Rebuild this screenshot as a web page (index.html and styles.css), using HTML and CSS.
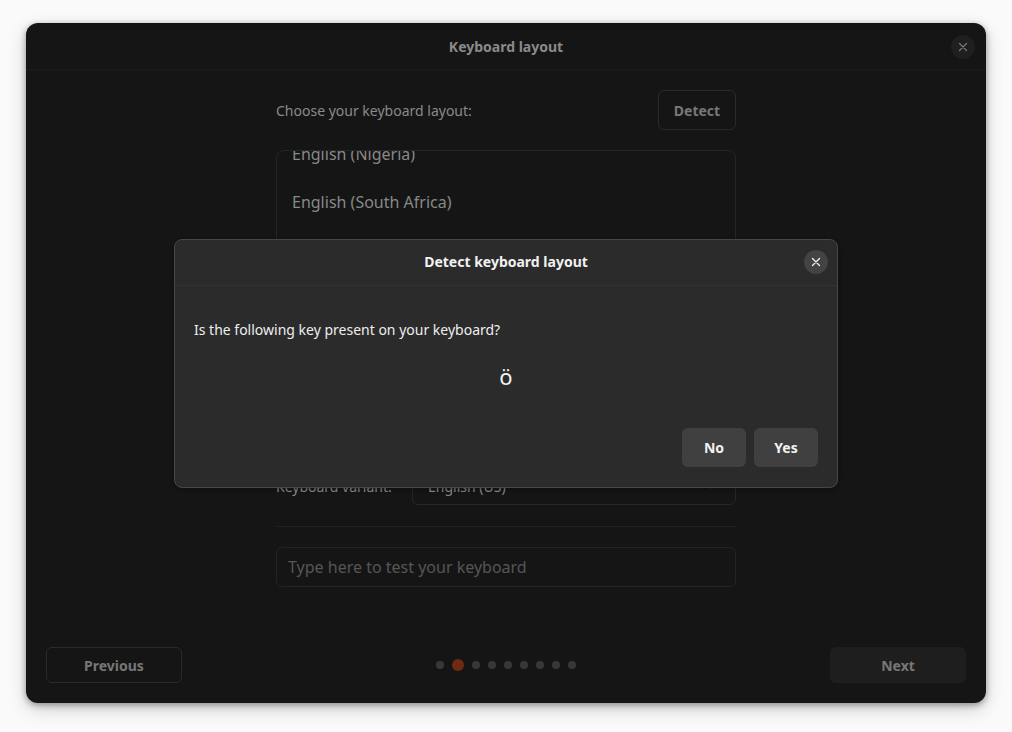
FILE: index.html
```html
<!DOCTYPE html>
<html lang="en">
<head>
<meta charset="utf-8">
<title>Keyboard layout</title>
<link rel="stylesheet" href="styles.css">
</head>
<body>
<div class="window">
  <header class="win-header">
    <span class="win-title">Keyboard layout</span>
    <button class="win-close" aria-label="Close">
      <svg viewBox="0 0 16 16" width="16" height="16"><path d="M4.5 4.5 L11.5 11.5 M11.5 4.5 L4.5 11.5" stroke="#7a7a7a" stroke-width="1.2" stroke-linecap="round" fill="none"/></svg>
    </button>
  </header>

  <main class="content">
    <div class="row-top">
      <span class="label">Choose your keyboard layout:</span>
      <button class="btn-outline">Detect</button>
    </div>
    <div class="layout-list">
      <ul class="items">
        <li>English (Nigeria)</li>
        <li>English (South Africa)</li>
        <li>English (UK)</li>
        <li>English (US)</li>
        <li>Esperanto</li>
        <li>Estonian</li>
      </ul>
    </div>
    <div class="row-variant">
      <span class="label variant-label">Keyboard variant:</span>
      <div class="combo">
        <span>English (US)</span>
        <svg viewBox="0 0 16 16" width="14" height="14"><path d="M4 6 L8 10 L12 6" stroke="#6a6a6a" stroke-width="1.4" fill="none" stroke-linecap="round" stroke-linejoin="round"/></svg>
      </div>
    </div>
    <hr class="sep">
    <div class="test-input">Type here to test your keyboard</div>
  </main>

  <footer class="win-footer">
    <button class="btn-outline nav-btn">Previous</button>
    <div class="dots">
      <span class="dot"></span>
      <span class="dot active"></span>
      <span class="dot"></span>
      <span class="dot"></span>
      <span class="dot"></span>
      <span class="dot"></span>
      <span class="dot"></span>
      <span class="dot"></span>
      <span class="dot"></span>
    </div>
    <button class="btn-flat nav-btn">Next</button>
  </footer>

  <div class="modal-layer">
    <div class="dialog">
      <div class="dlg-header">
        <span class="dlg-title">Detect keyboard layout</span>
        <button class="dlg-close" aria-label="Close">
          <svg viewBox="0 0 16 16" width="16" height="16"><path d="M4.5 4.5 L11.5 11.5 M11.5 4.5 L4.5 11.5" stroke="#f2f2f2" stroke-width="1.3" stroke-linecap="round" fill="none"/></svg>
        </button>
      </div>
      <div class="dlg-body">
        <p class="question">Is the following key present on your keyboard?</p>
        <div class="key">ö</div>
        <div class="actions">
          <button class="btn-dlg">No</button>
          <button class="btn-dlg">Yes</button>
        </div>
      </div>
    </div>
  </div>
</div>
</body>
</html>
```
FILE: styles.css
```css
* { box-sizing: border-box; }
html, body { margin: 0; }
body {
  background: #fafafa;
  padding: 23px 26px;
  font-family: "Noto Sans", "Open Sans", sans-serif;
  font-size: 14px;
  color: #8a8a8a;
}
button {
  font-family: inherit;
  cursor: default;
}
.window {
  position: relative;
  width: 960px;
  height: 680px;
  background: #151515;
  border-radius: 12px;
  box-shadow: 0 2px 6px rgba(0,0,0,0.35), 0 6px 18px rgba(0,0,0,0.18);
  display: flex;
  flex-direction: column;
  overflow: hidden;
}
.win-header {
  position: relative;
  height: 47px;
  border-bottom: 1px solid #1c1c1c;
  display: flex;
  align-items: center;
  justify-content: center;
  flex: none;
}
.win-title {
  font-weight: 700;
  font-size: 14px;
  color: #8a8a8a;
}
.win-close {
  position: absolute;
  right: 11px;
  top: 12px;
  width: 24px;
  height: 24px;
  border-radius: 50%;
  border: none;
  background: #1f1f1f;
  padding: 0;
  display: flex;
  align-items: center;
  justify-content: center;
}
.content {
  width: 460px;
  margin: 0 auto;
  padding-top: 20px;
  display: flex;
  flex-direction: column;
}
.row-top {
  height: 40px;
  display: flex;
  align-items: center;
  justify-content: space-between;
}
.label {
  font-size: 14px;
  color: #8a8a8a;
}
.btn-outline {
  height: 40px;
  width: 78px;
  border: 1px solid #2a2a2a;
  border-radius: 6px;
  background: transparent;
  color: #777;
  font-size: 14px;
  font-weight: 700;
  padding: 0;
}
.layout-list {
  margin-top: 20px;
  height: 297px;
  border: 1px solid #262626;
  border-radius: 8px;
  overflow: hidden;
}
.items {
  list-style: none;
  margin: -21px 0 0;
  padding: 0;
}
.items li {
  height: 48px;
  line-height: 48px;
  padding-left: 15px;
  font-size: 16px;
  color: #888;
}
.row-variant {
  margin-top: 20px;
  height: 38px;
  display: flex;
  align-items: center;
}
.variant-label {
  width: 136px;
  flex: none;
}
.combo {
  flex: 1;
  height: 38px;
  border: 1px solid #262626;
  border-radius: 6px;
  display: flex;
  align-items: center;
  justify-content: space-between;
  padding: 0 18px 0 15px;
  color: #888;
  font-size: 14px;
}
.sep {
  margin: 21px 0 0;
  border: none;
  border-top: 1px solid #222;
  height: 0;
}
.test-input {
  margin-top: 20px;
  height: 40px;
  border: 1px solid #242424;
  border-radius: 6px;
  padding-left: 11px;
  display: flex;
  align-items: center;
  font-size: 16px;
  color: #555;
}
.win-footer {
  margin-top: auto;
  padding: 0 20px 20px;
  display: flex;
  align-items: center;
  justify-content: space-between;
}
.nav-btn {
  width: 136px;
  height: 36px;
}
.btn-flat {
  border: none;
  border-radius: 6px;
  background: #1e1e1e;
  color: #777;
  font-size: 14px;
  font-weight: 700;
}
.dots {
  display: flex;
  align-items: center;
  gap: 8px;
}
.dot {
  width: 8px;
  height: 8px;
  border-radius: 50%;
  background: #383838;
}
.dot.active {
  width: 12px;
  height: 12px;
  background: #6f2a14;
}
.modal-layer {
  position: absolute;
  inset: 0;
  display: flex;
  align-items: center;
  justify-content: center;
}
.dialog {
  width: 664px;
  height: 249px;
  background: #2b2b2b;
  border: 1px solid #474747;
  border-radius: 8px;
  box-shadow: 0 1px 4px rgba(0,0,0,0.4);
  display: flex;
  flex-direction: column;
}
.dlg-header {
  position: relative;
  height: 46px;
  border-bottom: 1px solid #333;
  display: flex;
  align-items: center;
  justify-content: center;
  flex: none;
}
.dlg-title {
  font-weight: 700;
  font-size: 14px;
  color: #f2f2f2;
  margin-top: -1px;
}
.dlg-close {
  position: absolute;
  right: 9px;
  top: 10px;
  width: 24px;
  height: 24px;
  border-radius: 50%;
  border: none;
  background: #434343;
  padding: 0;
  display: flex;
  align-items: center;
  justify-content: center;
}
.dlg-body {
  padding: 34px 19px 20px;
  display: flex;
  flex-direction: column;
}
.question {
  margin: 0;
  line-height: 20px;
  font-size: 14px;
  color: #eeeeee;
}
.key {
  margin-top: 22px;
  line-height: 28px;
  height: 28px;
  text-align: center;
  font-size: 22px;
  color: #f2f2f2;
}
.actions {
  margin-top: 38px;
  display: flex;
  justify-content: flex-end;
  gap: 8px;
}
.btn-dlg {
  width: 64px;
  height: 39px;
  border: none;
  border-radius: 6px;
  background: #404040;
  color: #f2f2f2;
  font-size: 14px;
  font-weight: 700;
  padding: 0;
}
```
